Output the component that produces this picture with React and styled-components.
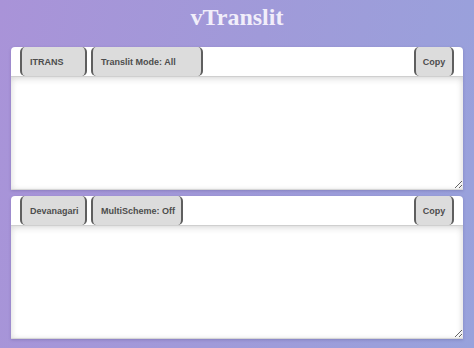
import styled, { createGlobalStyle } from "styled-components";

const GlobalStyle = createGlobalStyle`
  html, body {
    margin: 0;
    padding: 0;
  }
  body {
    font-family: "Liberation Sans", Arial, sans-serif;
  }
`;

const Page = styled.main`
  min-height: 348px;
  box-sizing: border-box;
  padding: 0 11px 10px 11px;
  background: linear-gradient(100deg, #a993d8 0%, #a09ad9 50%, #98a2dc 100%);
`;

const Title = styled.h1`
  margin: 0 0 13px;
  font-family: "Liberation Serif", "Times New Roman", serif;
  font-size: 24px;
  line-height: 34px;
  font-weight: bold;
  text-align: center;
  color: #f1eefa;
`;

const Panel = styled.section`
  background: #fff;
  border-radius: 4px 4px 0 0;
  overflow: hidden;
  box-shadow: 0 1px 3px rgba(60, 50, 110, 0.25);
  & + & {
    margin-top: 6px;
  }
`;

const Toolbar = styled.div`
  display: flex;
  align-items: stretch;
  gap: 4px;
  height: 29px;
  padding: 0 9px;
  border-bottom: 1px solid #cfcfcf;
`;

const Spacer = styled.div`
  flex: 1;
`;

const Button = styled.button`
  width: ${(p) => p.$w}px;
  height: 29px;
  box-sizing: border-box;
  margin: 0;
  padding: ${(p) => (p.$center ? "0" : "0 0 0 8px")};
  border: none;
  border-left: 2px solid #5f5f5f;
  border-right: 2px solid #5f5f5f;
  border-radius: 5px;
  background: #dcdcdc;
  color: #4d4d4d;
  font-family: "Liberation Sans", Arial, sans-serif;
  font-size: 9px;
  font-weight: bold;
  text-align: ${(p) => (p.$center ? "center" : "left")};
  cursor: pointer;
`;

const TextBox = styled.textarea`
  display: block;
  width: 100%;
  height: 113px;
  box-sizing: border-box;
  margin: 0;
  border: none;
  border-bottom: 1px solid #d6d6d6;
  outline: none;
  resize: vertical;
  background: #fff;
  box-shadow: inset 0 3px 6px rgba(0, 0, 0, 0.09), inset -3px 0 5px rgba(0, 0, 0, 0.05),
    inset 3px 0 5px rgba(0, 0, 0, 0.04);
`;

const Editor = ({ scheme, schemeWidth, mode, modeWidth }) => (
  <Panel>
    <Toolbar>
      <Button $w={schemeWidth}>{scheme}</Button>
      <Button $w={modeWidth}>{mode}</Button>
      <Spacer />
      <Button $w={40} $center>Copy</Button>
    </Toolbar>
    <TextBox />
  </Panel>
);

export default function App() {
  return (
    <Page>
      <GlobalStyle />
      <Title>vTranslit</Title>
      <Editor scheme="ITRANS" schemeWidth={67} mode="Translit Mode: All" modeWidth={112} />
      <Editor scheme="Devanagari" schemeWidth={67} mode="MultiScheme: Off" modeWidth={92} />
    </Page>
  );
}
